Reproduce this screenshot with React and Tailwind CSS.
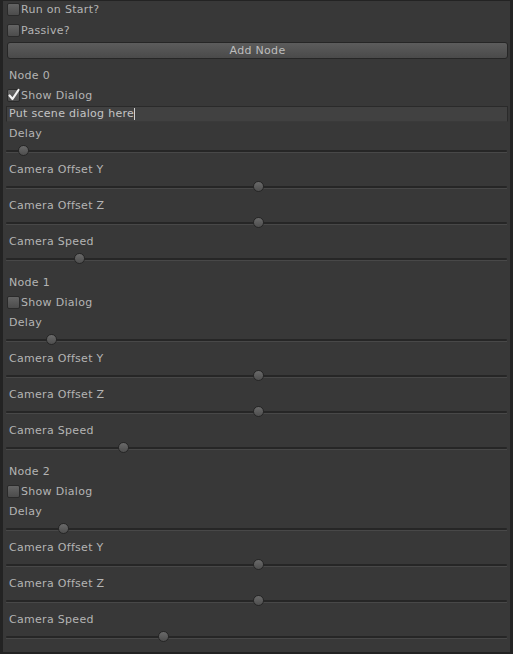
import React from "react";

const nodes = [
  { name: "Node 0", dialog: true, text: "Put scene dialog here", values: [23, 258, 258, 79] },
  { name: "Node 1", dialog: false, values: [51, 258, 258, 123] },
  { name: "Node 2", dialog: false, values: [63, 258, 258, 163] },
];

const sliderLabels = ["Delay", "Camera Offset Y", "Camera Offset Z", "Camera Speed"];

function Checkbox({ checked, label }) {
  return (
    <div className="flex items-center h-[18px] pl-[4px]">
      <div className="relative w-[13px] h-[13px] rounded-[2px] border border-[#2a2a2a] bg-gradient-to-b from-[#646464] to-[#4c4c4c]">
        {checked && (
          <svg className="absolute -left-[1px] -top-[2px]" width="14" height="14" viewBox="0 0 14 14">
            <path d="M2.5 7.5 L5.5 11 L11.5 2" fill="none" stroke="#f2f2f2" strokeWidth="2.2" strokeLinecap="round" strokeLinejoin="round" />
          </svg>
        )}
      </div>
      <span className="ml-[1px] pt-[1px]">{label}</span>
    </div>
  );
}

function Slider({ x }) {
  return (
    <div className="relative h-[18px] ml-[3px] mr-[3px]">
      <div className="absolute left-0 right-0 top-[8px] h-[2px] rounded-full bg-[#262626]" />
      <div className="absolute left-0 right-0 top-[10px] h-[1px] bg-[#484848]" />
      <div
        className="absolute top-[3px] w-[11px] h-[11px] rounded-full border border-[#262626] bg-gradient-to-b from-[#6a6a6a] to-[#4e4e4e]"
        style={{ left: x - 3 - 5.5 }}
      />
    </div>
  );
}

export default function App() {
  return (
    <div
      className="w-[513px] h-[654px] bg-[#383838] text-[#b4b4b4] text-[11px] leading-[18px] tracking-[0.3px] border-l-[3px] border-t border-r-[3px] border-b-[2px] border-[#232323] overflow-hidden"
      style={{ fontFamily: '"DejaVu Sans", sans-serif' }}
    >
      <div className="-mt-[1px]">
        <Checkbox label="Run on Start?" />
      </div>
      <div className="mt-[3px]">
        <Checkbox label="Passive?" />
      </div>
      <button className="mt-[3px] ml-[4px] w-[501px] h-[17px] rounded-[3px] border border-[#262626] bg-gradient-to-b from-[#5c5c5c] to-[#4a4a4a] text-[#bdbdbd] text-[11px] tracking-[0.3px] leading-[15px] flex items-center justify-center">
        Add Node
      </button>

      {nodes.map((n, i) => (
        <div key={n.name} className={i === 0 ? "mt-[7px]" : "mt-[5px]"}>
          <div className="h-[18px] pt-[1px] pl-[6px]">{n.name}</div>
          <div className={n.text ? "mt-[2px] mb-[1px]" : "mt-[2px] mb-[2px]"}>
            <Checkbox checked={n.dialog} label="Show Dialog" />
          </div>
          {n.text && (
            <div className="mt-[2px] mb-[2px] ml-[3px] mr-[2px] h-[16px] bg-[#414141] border border-[#2a2a2a] border-b-[#3a3a3a] text-[#c4c4c4] leading-[14px] pl-[2px] flex items-center">
              {n.text}
              <span className="w-[1px] h-[12px] bg-[#d0d0d0]" />
            </div>
          )}
          {sliderLabels.map((l, j) => (
            <div key={l}>
              <div className="h-[18px] pt-[1px] pl-[6px]">{l}</div>
              <Slider x={n.values[j] - 3} />
            </div>
          ))}
        </div>
      ))}
    </div>
  );
}
